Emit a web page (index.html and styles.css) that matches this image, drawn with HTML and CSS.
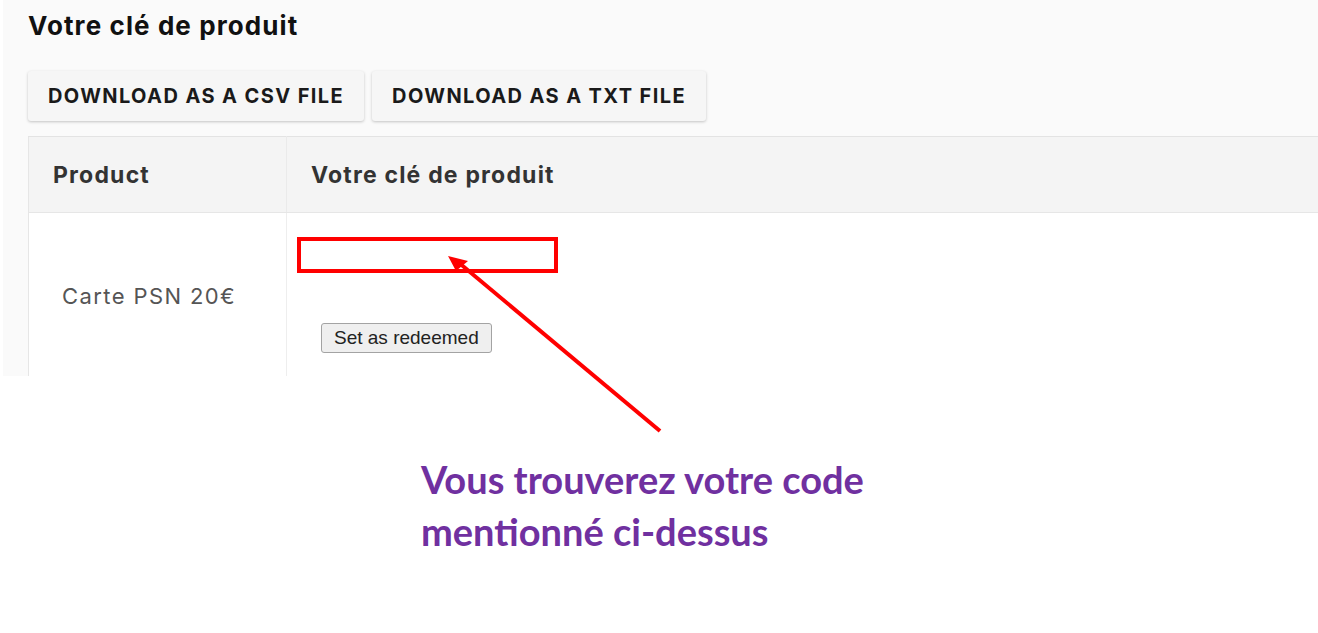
FILE: index.html
```html
<!DOCTYPE html>
<html lang="fr">
<head>
    <meta charset="UTF-8">
    <meta name="viewport" content="width=device-width, initial-scale=1.0">
    <title>Votre clé de produit</title>
    <link rel="stylesheet" href="styles.css">
</head>
<body>
  <div class="shot">
    <h1 class="title">Votre clé de produit</h1>

    <div class="downloads">
      <button class="dl-btn">DOWNLOAD AS A CSV FILE</button>
      <button class="dl-btn">DOWNLOAD AS A TXT FILE</button>
    </div>

    <table class="keys">
      <thead>
        <tr>
          <th class="col-product">Product</th>
          <th>Votre clé de produit</th>
        </tr>
      </thead>
      <tbody>
        <tr>
          <td class="product-name">Carte PSN 20€</td>
          <td class="key-cell">
            <div class="key-code"></div>
            <button class="redeem">Set as redeemed</button>
          </td>
        </tr>
      </tbody>
    </table>
  </div>

  <p class="note">Vous trouverez votre code<br>mentionné ci-dessus</p>

  <!-- annotation drawn over the screenshot -->
  <svg class="marks" width="1318" height="633" viewBox="0 0 1318 633">
    <rect x="299" y="239" width="257" height="32" fill="none" stroke="#ff0000" stroke-width="4"/>
    <line x1="660" y1="431" x2="458" y2="262" stroke="#ff0000" stroke-width="4"/>
    <polygon points="448,256 468,261 456,271" fill="#ff0000"/>
  </svg>
</body>
</html>
```

FILE: styles.css
```css
body {
margin: 0;
background: #fff;
font-family: 'Inter', sans-serif;
}

.shot {
margin-left: 3px;
height: 376px;
padding: 11px 0 0 25px;
box-sizing: border-box;
background: #fafafa;
overflow: hidden;
}

.title {
margin: 0 0 30px 0;
font-size: 26px;
line-height: 30px;
font-weight: 700;
letter-spacing: 1.1px;
color: #111;
}

.downloads {
display: flex;
gap: 8px;
}

.dl-btn {
height: 50px;
padding: 0 20px;
border: none;
border-radius: 3px;
background: #f6f6f6;
box-shadow: 0 1px 3px rgba(0, 0, 0, 0.22);
font-family: 'Inter', sans-serif;
font-size: 20px;
font-weight: 700;
letter-spacing: 1.4px;
color: #1a1a1a;
}

.keys {
margin-top: 15px;
width: 1400px;
border-collapse: collapse;
border-top: 1px solid #e3e3e3;
border-left: 1px solid #e6e6e6;
}

.keys th {
height: 75px;
padding: 0 24px;
text-align: left;
font-size: 23px;
font-weight: 700;
letter-spacing: 1.2px;
color: #333;
background: #f4f4f4;
border-bottom: 1px solid #e6e6e6;
}

.keys .col-product {
width: 209px;
border-right: 1px solid #eaeaea;
}

.keys td {
height: 166px;
background: #fff;
box-sizing: border-box;
}

.product-name {
padding: 0 0 0 33px;
border-right: 1px solid #eeeeee;
font-size: 22px;
letter-spacing: 1.4px;
color: #555;
vertical-align: middle;
}

.key-cell {
padding: 24px 24px;
vertical-align: top;
}

.key-code {
height: 36px;
margin-bottom: 50px;
}

.redeem {
margin-left: 10px;
height: 30px;
padding: 0 12px;
background: #efefef;
border: 1px solid #a3a3a3;
border-radius: 3px;
font-family: 'Liberation Sans', Arial, sans-serif;
font-size: 19px;
color: #222;
}

.note {
margin: 77px 0 0 421px;
font-family: 'Lato', sans-serif;
font-weight: 700;
font-size: 38px;
line-height: 52px;
color: #7030a0;
}

.marks {
position: absolute;
top: 0;
left: 0;
pointer-events: none;
}
```
